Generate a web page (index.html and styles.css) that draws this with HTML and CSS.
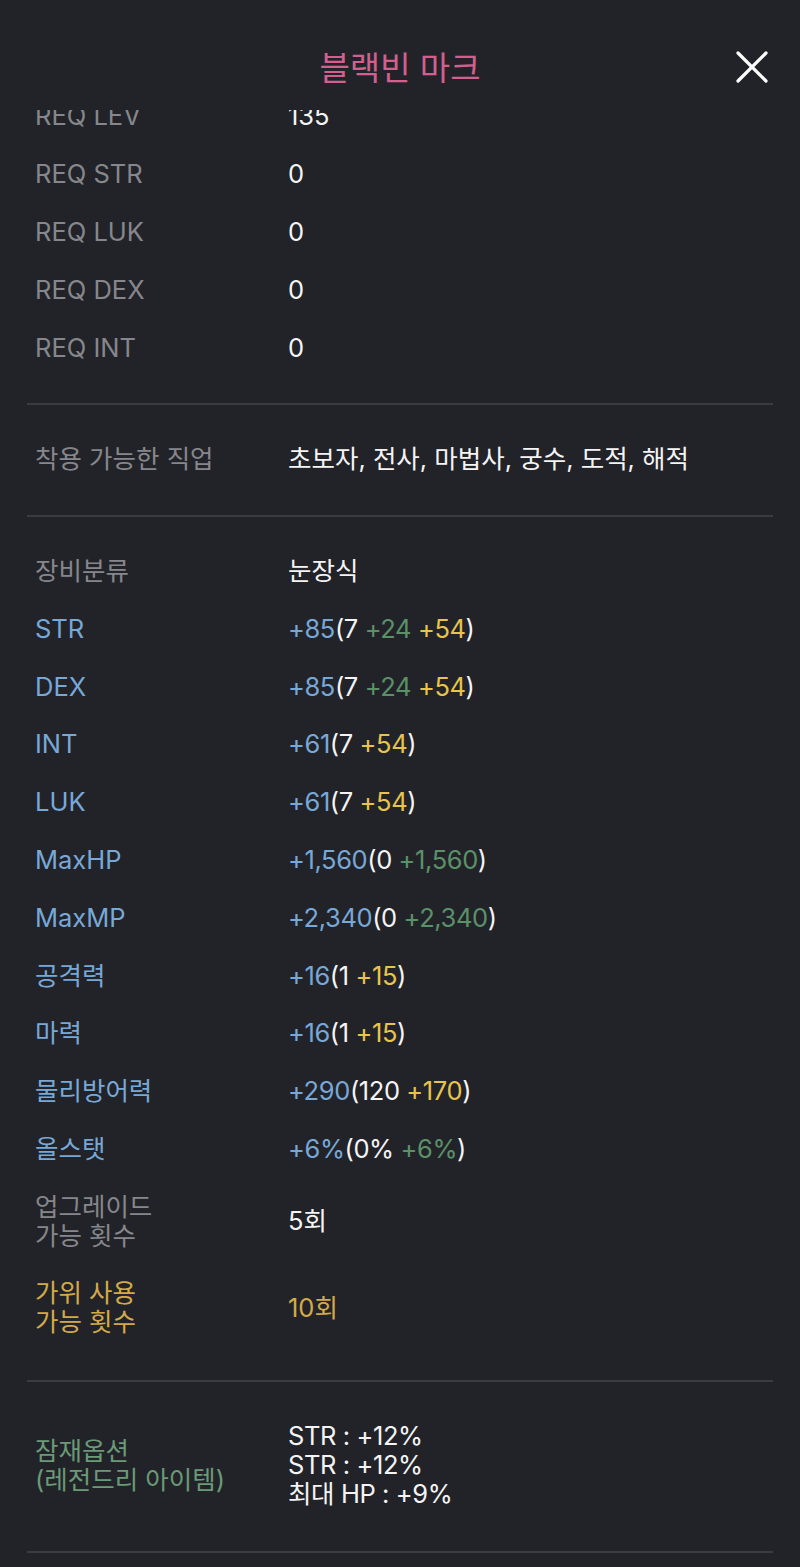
FILE: index.html
```html
<!DOCTYPE html>
<html lang="ko">
<head>
<meta charset="utf-8">
<link rel="stylesheet" href="styles.css">
</head>
<body>
<div class="screen">
  <header class="header">
    <h1 class="title">블랙빈 마크</h1>
    <button class="close" aria-label="닫기">
      <svg width="32" height="32" viewBox="0 0 32 32"><path d="M2 2 L30 30 M30 2 L2 30" stroke="#ffffff" stroke-width="3.2" stroke-linecap="round" fill="none"/></svg>
    </button>
  </header>
  <div class="viewport">
    <div class="content">
      <section class="section first">
        <div class="row"><div class="label">REQ LEV</div><div class="value">135</div></div>
        <div class="row"><div class="label">REQ STR</div><div class="value">0</div></div>
        <div class="row"><div class="label">REQ LUK</div><div class="value">0</div></div>
        <div class="row"><div class="label">REQ DEX</div><div class="value">0</div></div>
        <div class="row"><div class="label">REQ INT</div><div class="value">0</div></div>
      </section>
      <section class="section">
        <div class="row"><div class="label">착용 가능한 직업</div><div class="value">초보자, 전사, 마법사, 궁수, 도적, 해적</div></div>
      </section>
      <section class="section stats">
        <div class="row"><div class="label">장비분류</div><div class="value">눈장식</div></div>
        <div class="row"><div class="label blue">STR</div><div class="value num"><span class="blue">+85</span>(7 <span class="green">+24</span> <span class="yellow">+54</span>)</div></div>
        <div class="row"><div class="label blue">DEX</div><div class="value num"><span class="blue">+85</span>(7 <span class="green">+24</span> <span class="yellow">+54</span>)</div></div>
        <div class="row"><div class="label blue">INT</div><div class="value num"><span class="blue">+61</span>(7 <span class="yellow">+54</span>)</div></div>
        <div class="row"><div class="label blue">LUK</div><div class="value num"><span class="blue">+61</span>(7 <span class="yellow">+54</span>)</div></div>
        <div class="row"><div class="label blue">MaxHP</div><div class="value num"><span class="blue">+1,560</span>(0 <span class="green">+1,560</span>)</div></div>
        <div class="row"><div class="label blue">MaxMP</div><div class="value num"><span class="blue">+2,340</span>(0 <span class="green">+2,340</span>)</div></div>
        <div class="row"><div class="label blue">공격력</div><div class="value num"><span class="blue">+16</span>(1 <span class="yellow">+15</span>)</div></div>
        <div class="row"><div class="label blue">마력</div><div class="value num"><span class="blue">+16</span>(1 <span class="yellow">+15</span>)</div></div>
        <div class="row"><div class="label blue">물리방어력</div><div class="value num"><span class="blue">+290</span>(120 <span class="yellow">+170</span>)</div></div>
        <div class="row"><div class="label blue">올스탯</div><div class="value num"><span class="blue">+6%</span>(0% <span class="green">+6%</span>)</div></div>
        <div class="row"><div class="label">업그레이드<br>가능 횟수</div><div class="value">5회</div></div>
        <div class="row"><div class="label gold">가위 사용<br>가능 횟수</div><div class="value gold">10회</div></div>
      </section>
      <section class="section last">
        <div class="row"><div class="label potential">잠재옵션<br>(레전드리 아이템)</div><div class="value num">STR : +12%<br>STR : +12%<br>최대 HP : +9%</div></div>
      </section>
    </div>
  </div>
</div>
</body>
</html>
```
FILE: styles.css
```css
html, body {
  margin: 0;
  padding: 0;
  background: #222328;
}
body {
  font-family: Inter, "Noto Sans CJK KR", sans-serif;
  color: #f2f2f2;
}
.screen {
  width: 800px;
  height: 1567px;
  overflow: hidden;
  background: #222328;
  display: flex;
  flex-direction: column;
}
.header {
  height: 88px;
  padding-top: 22px;
  flex: none;
  display: flex;
  align-items: center;
  justify-content: center;
  position: relative;
  background: #222328;
}
.title {
  margin: 0;
  font-family: "Noto Sans CJK KR", sans-serif;
  font-weight: 400;
  font-size: 33px;
  line-height: 40px;
  color: #d2608f;
}
.close {
  position: absolute;
  right: 32px;
  top: 51px;
  width: 32px;
  height: 32px;
  padding: 0;
  border: 0;
  background: none;
  display: block;
}
.close svg { display: block; }
.viewport {
  flex: 1;
  overflow: hidden;
}
.content {
  margin-top: -23px;
  padding: 0 27px;
}
.section {
  padding: 25px 0 27px;
  border-bottom: 2px solid #3b3c41;
}
.section.first {
  padding-top: 0;
}
.section.stats {
  padding-bottom: 29px;
}
.section.last {
  padding-bottom: 28px;
}
.row {
  display: flex;
  align-items: center;
  padding: 14.4px 0;
  font-size: 25.5px;
  line-height: 29px;
}
.label {
  width: 253px;
  flex: none;
  padding-left: 8px;
  color: #86878c;
  font-weight: 400;
}
.value {
  color: #f4f4f4;
  font-weight: 400;
}
.value.num {
  letter-spacing: -0.4px;
}
.blue { color: #78a8d7; }
.green { color: #5b9169; }
.yellow { color: #e7c44c; }
.gold { color: #d3aa48; }
.potential { color: #6a9a77; }
```
